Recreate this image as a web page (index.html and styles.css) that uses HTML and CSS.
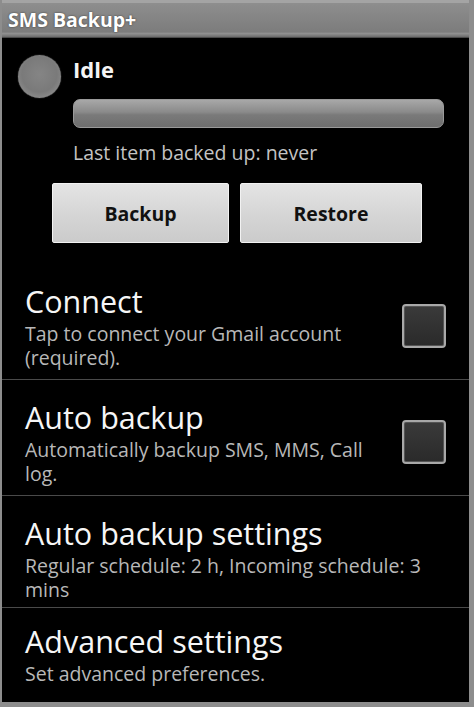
FILE: index.html
```html
<!DOCTYPE html>
<html>
<head>
<meta charset="utf-8">
<link rel="stylesheet" href="styles.css">
</head>
<body>
<div class="screen">
  <div class="titlebar">SMS Backup+</div>
  <div class="status">
    <div class="led"></div>
    <div class="status-main">
      <div class="state">Idle</div>
      <div class="progress"></div>
      <div class="last">Last item backed up: never</div>
    </div>
  </div>
  <div class="buttons">
    <div class="btn">Backup</div>
    <div class="btn">Restore</div>
  </div>
  <div class="pref">
    <div class="pref-text">
      <div class="pref-title">Connect</div>
      <div class="pref-sub">Tap to connect your Gmail account (required).</div>
    </div>
    <div class="check"></div>
  </div>
  <div class="pref">
    <div class="pref-text">
      <div class="pref-title">Auto backup</div>
      <div class="pref-sub">Automatically backup SMS, MMS, Call log.</div>
    </div>
    <div class="check"></div>
  </div>
  <div class="pref tight">
    <div class="pref-text">
      <div class="pref-title">Auto backup settings</div>
      <div class="pref-sub">Regular schedule: 2 h, Incoming schedule: 3 mins</div>
    </div>
  </div>
  <div class="pref last-pref">
    <div class="pref-text">
      <div class="pref-title">Advanced settings</div>
      <div class="pref-sub">Set advanced preferences.</div>
    </div>
  </div>
</div>
</body>
</html>
```
FILE: styles.css
```css
html, body {
  margin: 0;
  padding: 0;
}
body {
  width: 474px;
  height: 707px;
  background: #8d8d8d;
  font-family: "Open Sans", "DejaVu Sans", sans-serif;
  overflow: hidden;
}
.screen {
  margin: 0 5px 0 2px;
  height: 702px;
  background: #000;
  display: flex;
  flex-direction: column;
  border-top: 3px solid #a4a4a4;
  box-sizing: border-box;
}
.titlebar {
  height: 35px;
  box-sizing: border-box;
  background: linear-gradient(#8e8e8e, #7c7c7c 85%, #909090 90%, #6a6a6a);
  color: #fff;
  font-weight: bold;
  font-size: 19.5px;
  line-height: 33px;
  padding-left: 6px;
  text-shadow: 0 0 2px #333;
  border-bottom: 1px solid #4a4a4a;
}
.status {
  display: flex;
  padding: 17px 25px 0 16px;
  gap: 12px;
}
.led {
  width: 43px;
  height: 43px;
  border-radius: 50%;
  flex: none;
  background: radial-gradient(circle at 50% 45%, #858585 0%, #7a7a7a 55%, #8e8e8e 80%, #b0b0b0 100%);
  box-shadow: 0 0 1px #aaa;
}
.status-main {
  flex: 1;
  display: flex;
  flex-direction: column;
}
.state {
  color: #f4f4f4;
  font-weight: bold;
  font-size: 22px;
  line-height: 28px;
}
.progress {
  margin-top: 16px;
  height: 29px;
  box-sizing: border-box;
  border-radius: 7px;
  border: 1px solid #9a9a9a;
  background: linear-gradient(#a8a8a8, #8a8a8a 45%, #7a7a7a 55%, #6e6e6e);
}
.last {
  color: #c4c4c4;
  font-size: 19.5px;
  line-height: 26px;
  margin-top: 12px;
}
.buttons {
  display: flex;
  gap: 11px;
  padding: 17px 0 0 50px;
}
.btn {
  width: 177px;
  height: 60px;
  box-sizing: border-box;
  border: 1px solid #f2f2f2;
  border-radius: 2px;
  background: linear-gradient(#e4e4e4, #d6d6d6 50%, #cbcbcb);
  color: #111;
  font-weight: bold;
  font-size: 19.5px;
  display: flex;
  align-items: center;
  justify-content: center;
}
.btn + .btn {
  width: 182px;
}
.pref {
  display: flex;
  align-items: center;
  gap: 10px;
  padding: 17px 23px 9px 23px;
  border-bottom: 1px solid #4a4a4a;
}
.buttons + .pref {
  margin-top: 21px;
}
.tight {
  padding-bottom: 5px;
}
.last-pref {
  border-bottom: none;
  padding-top: 13px;
}
.pref-text {
  flex: 1;
}
.pref-title {
  color: #f6f6f6;
  font-size: 30.5px;
  line-height: 41px;
}
.pref-sub {
  color: #b8b8b8;
  font-size: 19.5px;
  line-height: 24px;
}
.check {
  flex: none;
  width: 44px;
  height: 44px;
  box-sizing: border-box;
  border: 2px solid #a8a8a8;
  border-radius: 4px;
  background: linear-gradient(#3a3a3a, #2a2a2a);
  box-shadow: inset 0 0 0 1px #555;
}
```
